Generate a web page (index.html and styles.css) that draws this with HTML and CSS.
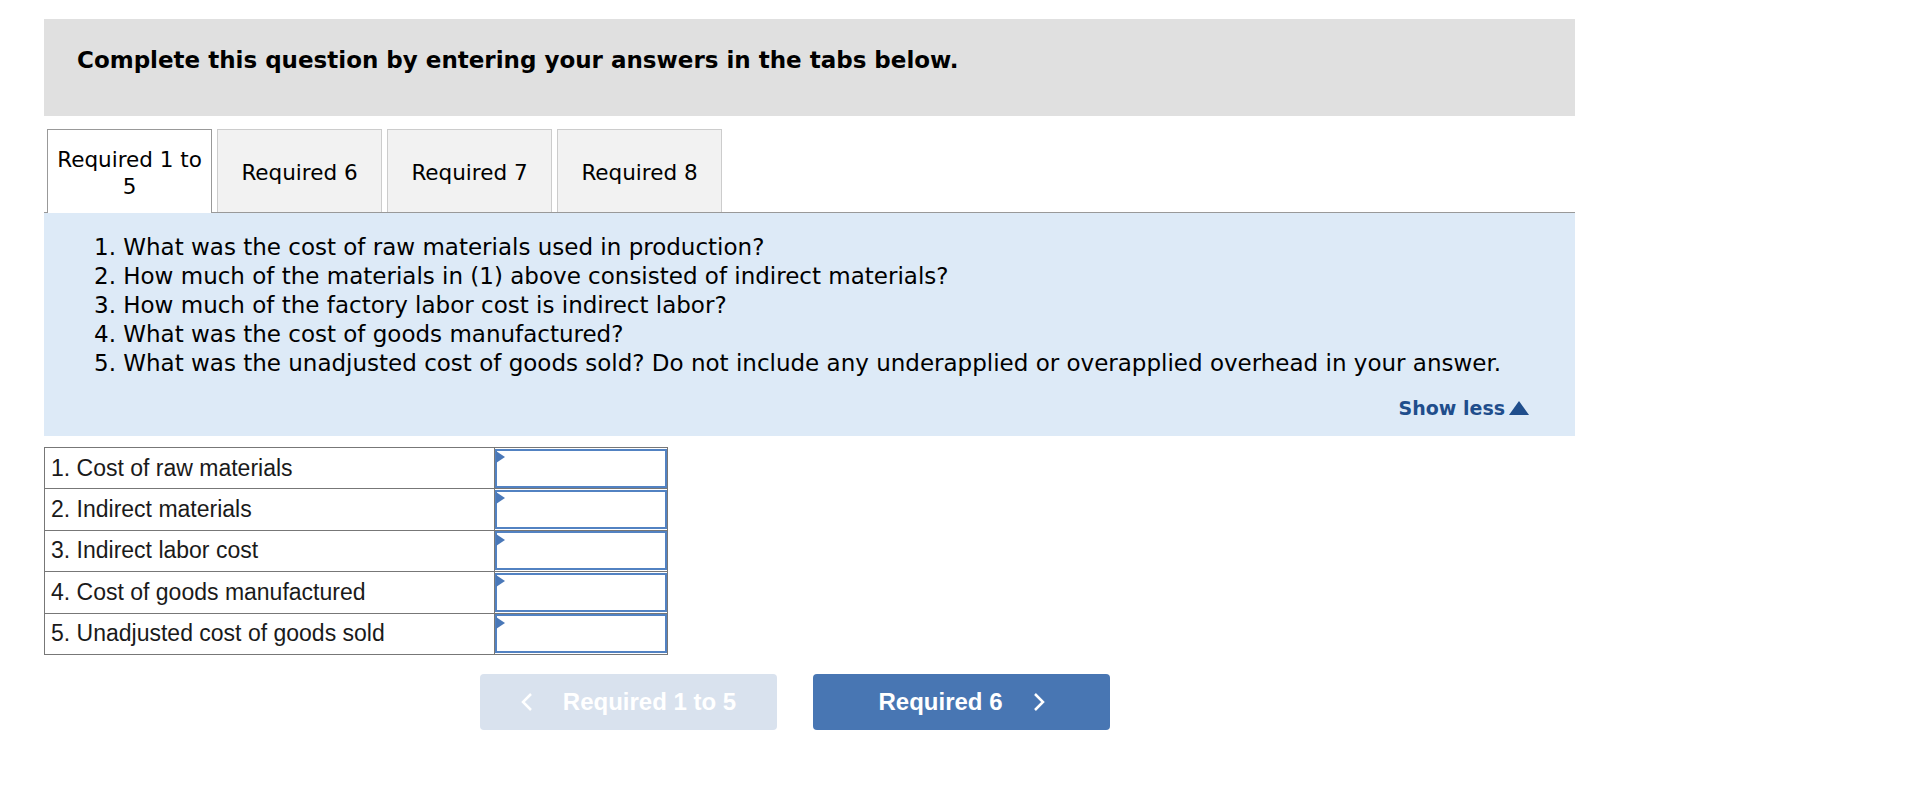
FILE: index.html
```html
<!DOCTYPE html>
<html lang="en">
<head>
    <meta charset="UTF-8">
    <meta name="viewport" content="width=device-width, initial-scale=1.0">
    <title>Required 1 to 5</title>
    <link rel="stylesheet" href="styles.css">
</head>
<body>
    <div class="page">
        <div class="notice">Complete this question by entering your answers in the tabs below.</div>

        <div class="tabs">
            <div class="tab active">Required 1 to 5</div>
            <div class="tab">Required 6</div>
            <div class="tab">Required 7</div>
            <div class="tab">Required 8</div>
        </div>

        <div class="question">
            <p>1. What was the cost of raw materials used in production?</p>
            <p>2. How much of the materials in (1) above consisted of indirect materials?</p>
            <p>3. How much of the factory labor cost is indirect labor?</p>
            <p>4. What was the cost of goods manufactured?</p>
            <p>5. What was the unadjusted cost of goods sold? Do not include any underapplied or overapplied overhead in your answer.</p>
            <div class="show-less">Show less<span class="arrow-up"></span></div>
        </div>

        <table class="answers">
            <colgroup>
                <col class="col-label">
                <col class="col-input">
            </colgroup>
            <tr>
                <td class="label">1. Cost of raw materials</td>
                <td class="cell"><span class="flag"></span><input type="text"></td>
            </tr>
            <tr>
                <td class="label">2. Indirect materials</td>
                <td class="cell"><span class="flag"></span><input type="text"></td>
            </tr>
            <tr>
                <td class="label">3. Indirect labor cost</td>
                <td class="cell"><span class="flag"></span><input type="text"></td>
            </tr>
            <tr>
                <td class="label">4. Cost of goods manufactured</td>
                <td class="cell"><span class="flag"></span><input type="text"></td>
            </tr>
            <tr>
                <td class="label">5. Unadjusted cost of goods sold</td>
                <td class="cell"><span class="flag"></span><input type="text"></td>
            </tr>
        </table>

        <div class="nav">
            <button class="btn btn-prev">
                <svg width="12" height="18" viewBox="0 0 12 18"><polyline points="10,1 2,9 10,17" fill="none" stroke="#fff" stroke-width="2.5"/></svg>
                Required 1 to 5
            </button>
            <button class="btn btn-next">
                Required 6
                <svg width="12" height="18" viewBox="0 0 12 18"><polyline points="2,1 10,9 2,17" fill="none" stroke="#fff" stroke-width="2.5"/></svg>
            </button>
        </div>
    </div>
</body>
</html>
```

FILE: styles.css
```css
body {
    margin: 0;
    font-family: "DejaVu Sans", Verdana, sans-serif;
    background-color: #fff;
    color: #000;
}
.page {
    width: 1531px;
    padding: 19px 0 0 44px;
}
.notice {
    background-color: #e0e0e0;
    font-weight: bold;
    font-size: 23px;
    line-height: 29px;
    padding: 27px 33px 41px;
}
.tabs {
    display: flex;
    align-items: flex-end;
    gap: 5px;
    margin-top: 13px;
    padding-left: 3px;
    border-bottom: 1px solid #999;
}
.tab {
    width: 165px;
    height: 83px;
    box-sizing: border-box;
    display: flex;
    align-items: center;
    justify-content: center;
    text-align: center;
    padding: 3px 8px 0;
    border: 1px solid #ccc;
    border-bottom: none;
    background-color: #f2f2f2;
    font-size: 21.5px;
    line-height: 27px;
}
.tab.active {
    height: 84px;
    margin-bottom: -1px;
    background-color: #fff;
    border-color: #999;
}
.question {
    background-color: #ddeaf7;
    padding: 20px 46px 16px 50px;
}
.question p {
    margin: 0;
    font-size: 23px;
    line-height: 29px;
}
.show-less {
    margin-top: 19px;
    text-align: right;
    font-weight: bold;
    font-size: 19px;
    line-height: 23px;
    color: #1f4e8c;
}
.arrow-up {
    display: inline-block;
    width: 0;
    height: 0;
    margin-left: 4px;
    border-left: 10px solid transparent;
    border-right: 10px solid transparent;
    border-bottom: 14px solid #1f4e8c;
}
.answers {
    margin-top: 11px;
    width: 623px;
    border-collapse: collapse;
    table-layout: fixed;
}
.col-label {
    width: 450px;
}
.col-input {
    width: 173px;
}
.answers tr {
    height: 41.4px;
}
.answers td {
    border: 1px solid #777;
    padding: 0;
}
.answers .label {
    padding: 0 6px;
    font-family: "Liberation Sans", Arial, sans-serif;
    font-size: 23px;
    color: #1a1a1a;
}
.cell {
    position: relative;
}
.cell input {
    display: block;
    width: 100%;
    height: 39px;
    margin: 0;
    box-sizing: border-box;
    border: 2px solid #5282c2;
    background-color: #fff;
}
.flag {
    position: absolute;
    top: 3px;
    left: 1px;
    width: 0;
    height: 0;
    border-top: 6px solid transparent;
    border-bottom: 6px solid transparent;
    border-left: 9px solid #4a78b8;
}
.nav {
    display: flex;
    gap: 36px;
    margin-top: 19px;
    padding-left: 436px;
}
.btn {
    width: 297px;
    height: 56px;
    display: flex;
    align-items: center;
    justify-content: center;
    gap: 30px;
    border: none;
    border-radius: 4px;
    font-family: "Liberation Sans", Arial, sans-serif;
    font-weight: bold;
    font-size: 24px;
    color: #fff;
    cursor: pointer;
}
.btn-prev {
    background-color: #d9e2ee;
}
.btn-next {
    background-color: #4876b3;
}
```
